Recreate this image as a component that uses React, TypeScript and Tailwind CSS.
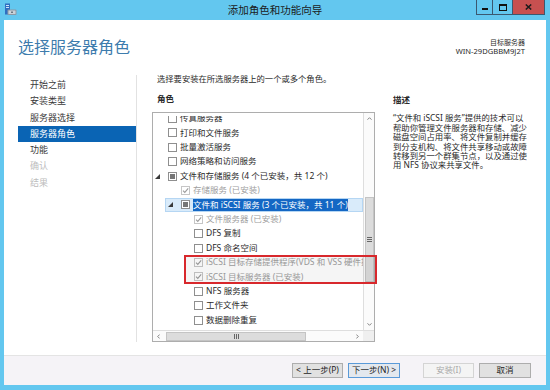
import React from 'react';

type Cb = 'empty' | 'partial' | 'checked';
interface Row {
  lvl: 0 | 1 | 2;
  cb: Cb;
  text: string;
  exp?: boolean;
  gray?: boolean;
  sel?: boolean;
}

const rows: Row[] = [
  { lvl: 0, cb: 'empty', text: '传真服务器' },
  { lvl: 0, cb: 'empty', text: '打印和文件服务' },
  { lvl: 0, cb: 'empty', text: '批量激活服务' },
  { lvl: 0, cb: 'empty', text: '网络策略和访问服务' },
  { lvl: 0, cb: 'partial', exp: true, text: '文件和存储服务 (4 个已安装，共 12 个)' },
  { lvl: 1, cb: 'checked', gray: true, text: '存储服务 (已安装)' },
  { lvl: 1, cb: 'partial', exp: true, sel: true, text: '文件和 iSCSI 服务 (3 个已安装，共 11 个)' },
  { lvl: 2, cb: 'checked', gray: true, text: '文件服务器 (已安装)' },
  { lvl: 2, cb: 'empty', text: 'DFS 复制' },
  { lvl: 2, cb: 'empty', text: 'DFS 命名空间' },
  { lvl: 2, cb: 'checked', gray: true, text: 'iSCSI 目标存储提供程序(VDS 和 VSS 硬件提供程序) (已安装)' },
  { lvl: 2, cb: 'checked', gray: true, text: 'iSCSI 目标服务器 (已安装)' },
  { lvl: 2, cb: 'empty', text: 'NFS 服务器' },
  { lvl: 2, cb: 'empty', text: '工作文件夹' },
  { lvl: 2, cb: 'empty', text: '数据删除重复' },
];

const indent: Record<number, string> = {
  0: 'pl-[2px]',
  1: 'pl-[15px]',
  2: 'pl-[28px]',
};

function Checkbox({ kind }: { kind: Cb }) {
  if (kind === 'empty')
    return <span className="block w-[9px] h-[9px] border border-[#8f8f8f] bg-white shrink-0" />;
  if (kind === 'partial')
    return (
      <span className="flex w-[9px] h-[9px] border border-[#8f8f8f] bg-white shrink-0 items-center justify-center">
        <span className="block w-[5px] h-[5px] bg-[#767676]" />
      </span>
    );
  return (
    <span className="flex w-[9px] h-[9px] border border-[#c6c6c6] bg-white shrink-0 items-center justify-center">
      <svg width="7" height="7" viewBox="0 0 7 7">
        <path d="M1 3.6 L2.8 5.4 L6.2 1.4" stroke="#9c9c9c" strokeWidth="1.1" fill="none" />
      </svg>
    </span>
  );
}

function Expander() {
  return (
    <span className="flex w-[13px] shrink-0 items-center">
      <svg width="5" height="5" viewBox="0 0 5 5">
        <polygon points="5,0 5,5 0,5" fill="#3a3a3a" />
      </svg>
    </span>
  );
}

function TreeRow({ r }: { r: Row }) {
  if (r.sel) {
    return (
      <div className="flex h-[14.4px] whitespace-nowrap pl-[12px]">
        <div className="flex flex-1 min-w-0 items-center bg-[#d9ebfa] border border-[#b5d6f3] pl-[2px] overflow-hidden">
          <Expander />
          <Checkbox kind={r.cb} />
          <span className="ml-[3px] bg-[#1467c4] text-white leading-[12px]">{r.text}</span>
        </div>
      </div>
    );
  }
  return (
    <div className={`flex h-[14.4px] items-center whitespace-nowrap ${indent[r.lvl]}`}>
      {r.exp ? <Expander /> : <span className="block w-[13px] shrink-0" />}
      <Checkbox kind={r.cb} />
      <span className={`ml-[3px] ${r.gray ? 'text-[#a0a0a0]' : 'text-[#2a2a2a]'}`}>{r.text}</span>
    </div>
  );
}

function ListBox() {
  return (
    <div className="relative w-[223px] h-[230px] border border-[#adadad] flex flex-col bg-white">
      <div className="flex flex-1 min-h-0">
        <div className="flex-1 min-w-0 pt-[3px] flex flex-col">
          <div className="flex-1 overflow-hidden text-[8.5px]">
            <div className="flex flex-col mt-[-4.6px]">
              {rows.map((r, i) => (
                <TreeRow key={i} r={r} />
              ))}
            </div>
          </div>
        </div>
        {/* vertical scrollbar */}
        <div className="w-[11px] border-l border-[#dedede] bg-[#fbfbfb] flex flex-col items-center">
          <div className="h-[11px] flex items-center justify-center">
            <svg width="5" height="3" viewBox="0 0 5 3">
              <path d="M0.5 2.7 L2.5 0.7 L4.5 2.7" stroke="#777" strokeWidth="0.9" fill="none" />
            </svg>
          </div>
          <div className="mt-[73px] w-[9px] h-[85px] bg-[#dcdcdc] border border-[#c4c4c4] flex flex-col items-center justify-center gap-[1px]">
            <span className="block w-[5px] h-[1px] bg-[#666]" />
            <span className="block w-[5px] h-[1px] bg-[#666]" />
            <span className="block w-[5px] h-[1px] bg-[#666]" />
          </div>
          <div className="flex-1" />
          <div className="h-[11px] flex items-center justify-center">
            <svg width="5" height="3" viewBox="0 0 5 3">
              <path d="M0.5 0.3 L2.5 2.3 L4.5 0.3" stroke="#777" strokeWidth="0.9" fill="none" />
            </svg>
          </div>
        </div>
      </div>
      {/* horizontal scrollbar */}
      <div className="h-[11px] flex border-t border-[#dedede]">
        <div className="flex flex-1 items-center bg-[#fbfbfb]">
          <div className="w-[11px] h-full flex items-center justify-center">
            <svg width="3" height="5" viewBox="0 0 3 5">
              <path d="M2.7 0.5 L0.7 2.5 L2.7 4.5" stroke="#777" strokeWidth="0.9" fill="none" />
            </svg>
          </div>
          <div className="ml-[2px] w-[140px] h-[9px] bg-[#dcdcdc] border border-[#c4c4c4] flex items-center justify-center gap-[1px]">
            <span className="block w-[1px] h-[5px] bg-[#666]" />
            <span className="block w-[1px] h-[5px] bg-[#666]" />
            <span className="block w-[1px] h-[5px] bg-[#666]" />
          </div>
          <div className="flex-1" />
          <div className="w-[11px] h-full flex items-center justify-center">
            <svg width="3" height="5" viewBox="0 0 3 5">
              <path d="M0.3 0.5 L2.3 2.5 L0.3 4.5" stroke="#777" strokeWidth="0.9" fill="none" />
            </svg>
          </div>
        </div>
        <div className="w-[11px] bg-[#efefef]" />
      </div>
      {/* red annotation */}
      <div className="absolute left-[31px] top-[142px] w-[193px] h-[29px] border-2 border-[#d8282c] bg-black/[0.04]" />
    </div>
  );
}

function AppIcon() {
  return (
    <svg width="13" height="13" viewBox="0 0 13 13">
      <rect x="1" y="0.5" width="5" height="11" fill="#2f6fc0" />
      <rect x="2" y="2" width="3" height="1" fill="#cfe3f8" />
      <rect x="2" y="4" width="3" height="1" fill="#cfe3f8" />
      <rect x="3.5" y="6.5" width="9" height="5.5" rx="1" fill="#8d9aa6" />
      <rect x="4.5" y="7.5" width="7" height="3.5" rx="0.5" fill="#c9d2da" />
      <rect x="7" y="8.5" width="2" height="1.5" fill="#6a7884" />
    </svg>
  );
}

function TitleBar() {
  return (
    <div className="grid grid-cols-[1fr_auto_1fr] h-[20px] shrink-0">
      <div className="pl-[4px] pt-[3px]">
        <AppIcon />
      </div>
      <div className="text-[10.5px] leading-[21px] text-[#1b1b1b]">添加角色和功能向导</div>
      <div className="flex justify-end pr-[5px]">
        <div className="flex h-[15px] border-x border-b border-[#3b5870]">
          <div className="w-[16px] flex items-end justify-center pb-[4px] border-r border-[#3b5870]">
            <span className="block w-[6px] h-[2px] bg-[#111]" />
          </div>
          <div className="w-[20px] flex items-center justify-center border-r border-[#3b5870]">
            <span className="block w-[8px] h-[7px] border border-[#111] border-t-2" />
          </div>
          <div className="w-[31px] bg-[#c75050] flex items-center justify-center">
            <svg width="7" height="6" viewBox="0 0 7 6">
              <path d="M0.8 0.5 L6.2 5.5 M6.2 0.5 L0.8 5.5" stroke="#1a1a1a" strokeWidth="1.5" />
            </svg>
          </div>
        </div>
      </div>
    </div>
  );
}

const nav = [
  { t: '开始之前', s: 'on' },
  { t: '安装类型', s: 'on' },
  { t: '服务器选择', s: 'on' },
  { t: '服务器角色', s: 'sel' },
  { t: '功能', s: 'on' },
  { t: '确认', s: 'off' },
  { t: '结果', s: 'off' },
];

export default function App() {
  return (
    <div className="w-[550px] h-[390px] bg-[#63c7ef] flex flex-col overflow-hidden font-['Noto_Sans','Noto_Sans_CJK_SC',sans-serif]">
      <TitleBar />
      <div className="flex-1 mx-[4px] mb-[5px] bg-white flex flex-col min-h-0">
        {/* header */}
        <div className="h-[50px] shrink-0 flex justify-between pl-[14px] pr-[21px]">
          <div className="pt-[17px] text-[16px] leading-[20px] text-[#3d7cad]">选择服务器角色</div>
          <div className="pt-[17.5px] flex flex-col items-end text-[#2a2a2a]">
            <div className="text-[7px] leading-[9px]">目标服务器</div>
            <div className="text-[7.6px] leading-[9px]">WIN-29DGBBM9J2T</div>
          </div>
        </div>
        {/* body */}
        <div className="h-[285px] shrink-0 flex">
          <div className="w-[133px] mt-[5px] h-[267px] border-r border-[#e2e2e2] pl-[14px] pt-[2px] flex flex-col">
            {nav.map((n, i) => (
              <div
                key={i}
                className={`h-[16.3px] leading-[16.3px] pl-[12px] text-[9px] ${
                  n.s === 'sel' ? 'bg-[#0a64b4] text-white' : n.s === 'off' ? 'text-[#bdbdbd]' : 'text-[#3a3a3a]'
                }`}
              >
                {n.t}
              </div>
            ))}
          </div>
          <div className="w-[238px] pl-[15px] pt-[3px] flex flex-col">
            <div className="pl-[5px] text-[8.3px] leading-[12px] text-[#2a2a2a] whitespace-nowrap">
              选择要安装在所选服务器上的一个或多个角色。
            </div>
            <div className="pl-[5px] mt-[8px] text-[8.5px] leading-[12px] font-bold text-[#2a2a2a]">角色</div>
            <div className="mt-[7px]">
              <ListBox />
            </div>
          </div>
          <div className="flex-1 pl-[18px] pt-[24px] text-[#2a2a2a]">
            <div className="text-[8.5px] leading-[12px] font-bold">描述</div>
            <div className="mt-[7.3px] text-[8.4px] leading-[9.4px] whitespace-nowrap">
              “文件和 iSCSI 服务”提供的技术可以
              <br />
              帮助你管理文件服务器和存储、减少
              <br />
              磁盘空间占用率、将文件复制并缓存
              <br />
              到分支机构、将文件共享移动或故障
              <br />
              转移到另一个群集节点，以及通过使
              <br />
              用 NFS 协议来共享文件。
            </div>
          </div>
        </div>
        {/* footer */}
        <div className="flex-1 bg-[#f5f3f7] border-t border-[#e4e4e4] flex items-center justify-end pr-[15px] text-[8.5px]">
          <div className="flex items-center">
            <button className="w-[51px] h-[15px] bg-[#e1e1e1] border border-[#adadad] text-[#1e1e1e] flex items-center justify-center">
              &lt; 上一步(P)
            </button>
            <button className="ml-[5px] w-[52px] h-[15px] bg-[#e3e8ee] border border-[#5a9ad8] text-[#1e1e1e] flex items-center justify-center">
              下一步(N) &gt;
            </button>
            <button className="ml-[23px] w-[51px] h-[15px] bg-[#f4f4f4] border border-[#d4d4d4] text-[#a8a8a8] flex items-center justify-center">
              安装(I)
            </button>
            <button className="ml-[5px] w-[52px] h-[15px] bg-[#e1e1e1] border border-[#adadad] text-[#1e1e1e] flex items-center justify-center">
              取消
            </button>
          </div>
        </div>
      </div>
    </div>
  );
}
